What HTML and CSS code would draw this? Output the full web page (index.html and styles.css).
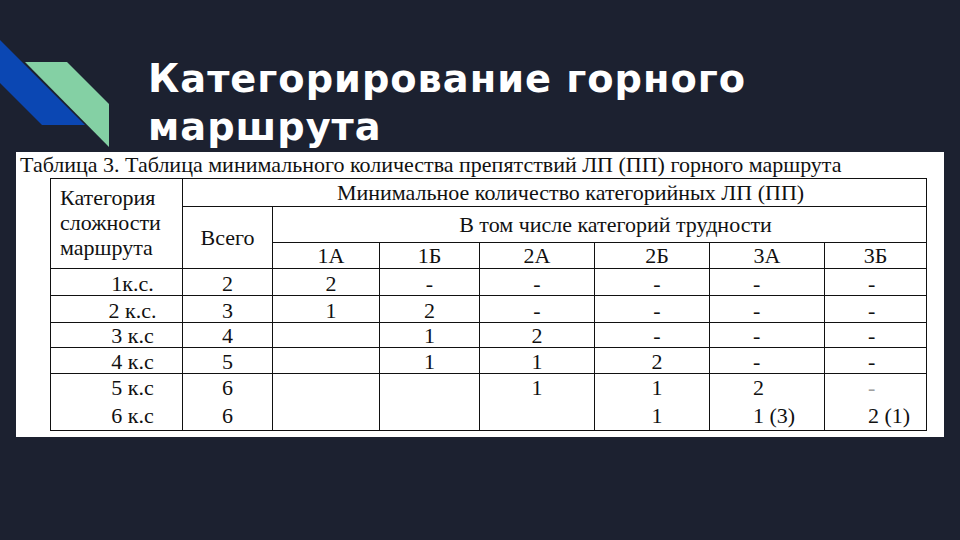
FILE: index.html
```html
<!DOCTYPE html>
<html lang="ru">
<head>
<meta charset="utf-8">
<title>Категорирование горного маршрута</title>
<link rel="stylesheet" href="styles.css">
</head>
<body>
<div class="slide">
  <header class="header">
    <svg class="logo" width="110" height="115" viewBox="0 37 110 115" aria-hidden="true">
      <polygon points="0,40 85,125 42,125 0,83" fill="#0b47b3"/>
      <polygon points="25,62 67,62 109,104 109,147" fill="#84d0a4"/>
    </svg>
    <h1 class="title">Категорирование горного маршрута</h1>
  </header>
  <section class="panel">
    <p class="caption">Таблица 3. Таблица минимального количества препятствий ЛП (ПП) горного маршрута</p>
    <table class="grid">
      <colgroup>
        <col class="c1"><col class="c2"><col class="c3"><col class="c4"><col class="c5"><col class="c6"><col class="c7"><col class="c8">
      </colgroup>
      <tr class="h1row">
        <th rowspan="3" class="cat">Категория<br>сложности<br>маршрута</th>
        <th colspan="7" class="wide">Минимальное количество категорийных ЛП (ПП)</th>
      </tr>
      <tr class="h2row">
        <th rowspan="2">Всего</th>
        <th colspan="6" class="wide">В том числе категорий трудности</th>
      </tr>
      <tr class="h3row">
        <th class="sh">1А</th><th>1Б</th><th>2А</th><th class="sh">2Б</th><th>3А</th><th>3Б</th>
      </tr>
      <tr class="r27">
        <td class="ks">1к.с.</td><td>2</td><td class="sh">2</td><td>-</td><td>-</td><td class="sh">-</td><td class="la">-</td><td class="la">-</td>
      </tr>
      <tr class="r27">
        <td class="ks">2 к.с.</td><td>3</td><td class="sh">1</td><td>2</td><td>-</td><td class="sh">-</td><td class="la">-</td><td class="la">-</td>
      </tr>
      <tr class="r25">
        <td class="ks">3 к.с</td><td>4</td><td class="sh"></td><td>1</td><td>2</td><td class="sh">-</td><td class="la">-</td><td class="la">-</td>
      </tr>
      <tr class="r26">
        <td class="ks">4 к.с</td><td>5</td><td class="sh"></td><td>1</td><td>1</td><td class="sh">2</td><td class="la">-</td><td class="la">-</td>
      </tr>
      <tr class="r53">
        <td class="ks">5 к.с<br>6 к.с</td><td>6<br>6</td><td class="sh"></td><td></td><td>1</td><td class="sh">1<br>1</td><td class="la">2<br>1 (3)</td><td class="la"><span class="faint">-</span><br>2 (1)</td>
      </tr>
    </table>
  </section>
</div>
</body>
</html>
```

FILE: styles.css
```css
html, body {
  margin: 0;
  padding: 0;
  background: #1c2130;
}

.slide {
  width: 960px;
  height: 540px;
  background: #1c2130;
  overflow: hidden;
}

.header {
  display: flex;
  align-items: flex-start;
  height: 152px;
  padding-top: 37px;
  box-sizing: border-box;
}

.logo {
  display: block;
  flex: none;
}

.title {
  margin: 18px 0 0 38px;
  font-family: "DejaVu Sans", sans-serif;
  font-weight: bold;
  font-size: 38.3px;
  line-height: 48px;
  letter-spacing: 1px;
  color: #ffffff;
}

.panel {
  margin-left: 16px;
  width: 928px;
  height: 285px;
  background: #ffffff;
  box-sizing: border-box;
  padding: 0 0 0 4px;
  font-family: "Liberation Serif", "Times New Roman", serif;
  color: #111;
}

.caption {
  margin: 0;
  height: 26px;
  font-size: 22px;
  line-height: 26px;
  white-space: nowrap;
}

.grid {
  margin-left: 30px;
  border-collapse: collapse;
  table-layout: fixed;
  width: 876px;
  font-size: 22px;
}

.c1 { width: 132px; }
.c2 { width: 90px; }
.c3 { width: 107px; }
.c4 { width: 100px; }
.c5 { width: 115px; }
.c6 { width: 115px; }
.c7 { width: 115px; }
.c8 { width: 102px; }

.grid th,
.grid td {
  border: 1.5px solid #111;
  padding: 0;
  font-weight: normal;
  text-align: center;
  white-space: nowrap;
  overflow: hidden;
}

.grid th {
  vertical-align: middle;
  line-height: 24px;
}

.grid th.wide {
  padding-left: 32px;
}

.grid th.cat {
  text-align: left;
  padding-left: 9px;
  line-height: 25px;
  vertical-align: top;
  padding-top: 6px;
}

.h1row { height: 28px; }
.h2row { height: 36px; }
.h3row { height: 26px; }
.r27 { height: 27px; }
.r25 { height: 25px; }
.r26 { height: 26px; }
.r53 { height: 53px; }

.grid td {
  vertical-align: bottom;
  line-height: 22px;
}

.grid .r53 td {
  vertical-align: top;
  line-height: 28px;
}

.grid td.ks {
  padding-left: 32px;
}

.grid .sh {
  padding-left: 10px;
}

.grid td.la {
  text-align: left;
  padding-left: 43px;
}

.faint {
  color: #a0a0a0;
}
```
